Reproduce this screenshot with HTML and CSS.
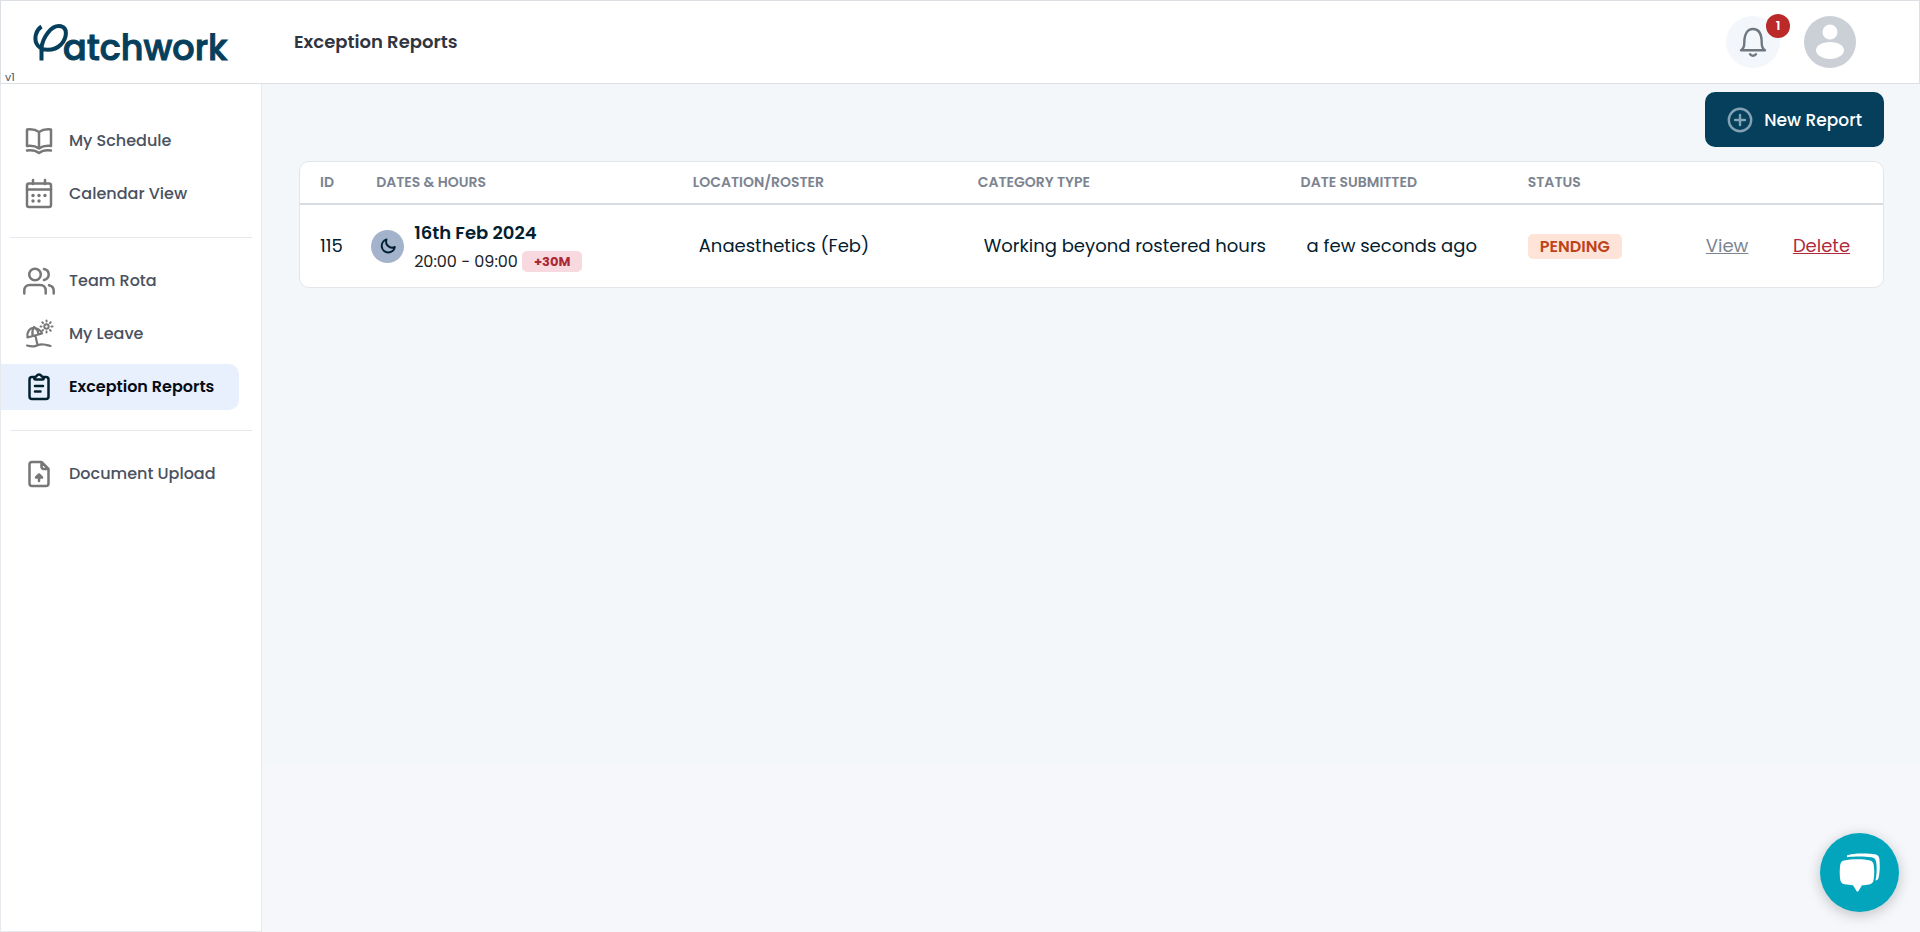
FILE: index.html
```html
<!DOCTYPE html>
<html lang="en">
<head>
<meta charset="utf-8">
<title>Exception Reports - Patchwork</title>
<meta name="viewport" content="width=device-width, initial-scale=1">
<link rel="stylesheet" href="styles.css">
</head>
<body>
<div class="app">
  <header class="topbar">
    <div class="brand">
      <a class="logo" href="#" aria-label="Patchwork">
        <svg class="logo-mark" viewBox="0 0 36 38" aria-hidden="true"><path d="M8.500 2.500C3 6 1 14 3.500 19.500c4 8.500 17.500 8 24.500 1C34 14 35 4 28 2.300 18 .3 9.500 14 8.500 24V36.500"/></svg>
        <span class="logo-text">atchwork</span>
      </a>
      <span class="version">v1</span>
    </div>
    <h1 class="page-title">Exception Reports</h1>
    <div class="account">
      <button class="bell" type="button" aria-label="Notifications">
        <svg class="bell-icon" viewBox="0 0 28 30" aria-hidden="true"><path d="M2 23.200h24c-2.200-1.200-3.300-3.500-3.300-7.500C22.700 7 19.500 2 14 2S5.300 7 5.300 15.700c0 4-1.100 6.300-3.300 7.500z"/><path d="M11 27.200c1.200 2 4.800 2 6 0"/></svg>
        <span class="count">1</span>
      </button>
      <button class="avatar" type="button" aria-label="Profile">
        <svg viewBox="0 0 52 52" aria-hidden="true"><circle cx="26" cy="26" r="26" fill="#cbd0d6"/><circle cx="26" cy="16" r="7.500" fill="#fff"/><path d="M12 34.500c0-5 6-8.500 14-8.500s14 3.500 14 8.500c0 4-6 8.500-14 8.500s-14-4.500-14-8.500z" fill="#fff"/></svg>
      </button>
    </div>
  </header>
  <div class="body">
    <nav class="sidebar" aria-label="Main">
      <ul class="nav-group">
        <li><a class="nav-item" href="#">
          <svg class="icon" viewBox="0 0 32 32" aria-hidden="true"><path d="M16 7c-3.500-2.500-8-3-12-2.500V21c4-.5 8.500 0 12 2.500C19.500 21 24 20.500 28 21V4.500C24 4 19.500 4.500 16 7zM16 7v16.500M4 25.500c4-.6 8.500-.2 12 2.500 3.500-2.700 8-3.100 12-2.500"/></svg>
          My Schedule</a></li>
        <li><a class="nav-item" href="#">
          <svg class="icon" viewBox="0 0 32 32" aria-hidden="true"><rect x="4" y="5.500" width="24" height="23.500" rx="2"/><path d="M4 11.500h24M10 2v4M22 2v4"/><g fill="currentColor" stroke="none"><circle cx="10" cy="17.500" r="1.700"/><circle cx="16" cy="17.500" r="1.700"/><circle cx="22" cy="17.500" r="1.700"/><circle cx="10" cy="23" r="1.700"/><circle cx="16" cy="23" r="1.700"/></g></svg>
          Calendar View</a></li>
      </ul>
      <hr class="divider">
      <ul class="nav-group">
        <li><a class="nav-item" href="#">
          <svg class="icon" viewBox="0 0 32 32" aria-hidden="true"><circle cx="12" cy="9.500" r="5.800"/><path d="M1.300 28.500v-3c0-3.300 2.400-5.500 5.500-5.500h10.400c3.100 0 5.500 2.200 5.500 5.500v3M21 4c2.900.7 4.700 2.900 4.700 5.500s-1.800 4.800-4.700 5.500M26 20.200c3 .7 4.700 2.600 4.700 5.300v3"/></svg>
          Team Rota</a></li>
        <li><a class="nav-item" href="#">
          <svg class="icon" viewBox="0 0 32 32" aria-hidden="true"><path d="M4.500 19.500c-.7-6.500 2.500-10 7-9.500 3.500.2 6 2.500 7.500 5.500zM9.500 18C9 14.500 9.500 11.500 11 9c2.500 1.500 4 4 4.500 7M12.500 18l2 9M4 27.500c3 .8 5 1.200 8 .6 4-.8 4-2.300 8.500-1.600 3 .4 4.500 1 7 1.500" stroke-width="2.200"/><circle cx="23.500" cy="8.500" r="2.200" stroke-width="2"/><path d="M23.500 2.500v1M23.500 13.500v1M17.500 8.500h1M28.500 8.500h1M19.300 4.300l.7.700M27 12l.7.700M27.700 4.300l-.7.700M20 12l-.7.700" stroke-width="2"/></svg>
          My Leave</a></li>
        <li><a class="nav-item active" href="#" aria-current="page">
          <svg class="icon" viewBox="0 0 32 32" aria-hidden="true"><path d="M12 6H9a2.500 2.500 0 0 0-2.500 2.500v17A2.500 2.500 0 0 0 9 28h14a2.500 2.500 0 0 0 2.500-2.500v-17A2.500 2.500 0 0 0 23 6h-3M12 15h8M12 20.500h5.500"/><path d="M12.500 8.500c-1 0-1.300-.4-1.200-1.200.3-1.600 1.200-1.300 2-2C13.800 4.800 14 3.500 16 3.500s2.200 1.300 2.700 1.800c.8.700 1.700.4 2 2 .1.800-.2 1.200-1.200 1.200z"/></svg>
          Exception Reports</a></li>
      </ul>
      <hr class="divider">
      <ul class="nav-group">
        <li><a class="nav-item" href="#">
          <svg class="icon" viewBox="0 0 32 32" aria-hidden="true"><path d="M18.500 4H9a2.500 2.500 0 0 0-2.500 2.500v19A2.500 2.500 0 0 0 9 28h14a2.500 2.500 0 0 0 2.500-2.500V11zM18.500 4v4.500A2.500 2.500 0 0 0 21 11h4.500M16 23v-5.500M13 19.500l3-3 3 3z"/></svg>
          Document Upload</a></li>
      </ul>
    </nav>
    <main class="content">
      <div class="actions">
        <button class="new-report" type="button">
          <svg class="plus" viewBox="0 0 26 26" aria-hidden="true"><circle cx="13" cy="13" r="11.200"/><path d="M13 8v10M8 13h10"/></svg>
          New Report
        </button>
      </div>
      <div class="card">
        <table class="reports">
          <colgroup><col class="c-id"><col class="c-dates"><col class="c-location"><col class="c-category"><col class="c-submitted"><col class="c-status"><col class="c-view"><col class="c-delete"></colgroup>
          <thead>
            <tr><th scope="col">ID</th><th scope="col">DATES &amp; HOURS</th><th scope="col">LOCATION/ROSTER</th><th scope="col">CATEGORY TYPE</th><th scope="col">DATE SUBMITTED</th><th scope="col">STATUS</th><td></td><td></td></tr>
          </thead>
          <tbody>
            <tr>
              <td>115</td>
              <td class="cell-dates">
                <div class="shift">
                  <span class="moon"><svg viewBox="0 0 16 16" aria-hidden="true"><path d="M6.500 1.500A6.600 6.600 0 1 0 14.800 9 6 6 0 0 1 6.500 1.500z"/></svg></span>
                  <div class="when">
                    <strong class="date">16th Feb 2024</strong>
                    <div class="hours">20:00 − 09:00 <span class="extra">+30M</span></div>
                  </div>
                </div>
              </td>
              <td class="inset">Anaesthetics (Feb)</td>
              <td class="inset">Working beyond rostered hours</td>
              <td class="inset">a few seconds ago</td>
              <td><span class="status">PENDING</span></td>
              <td><a class="view" href="#">View</a></td>
              <td><a class="delete" href="#">Delete</a></td>
            </tr>
          </tbody>
        </table>
      </div>
    </main>
  </div>
</div>
<button class="chat" type="button" aria-label="Open chat">
  <svg viewBox="0 0 42 40" aria-hidden="true"><path d="M8 2.500C12-.2 32 0 37 1.500c2 .7 3 2 3.300 4C41 12 41 19 39.500 25c-.4 1.500-1.500 2.200-3 2.500C38 20 38 13 37 8.500c-.5-2.500-2-3.800-4.500-4.200C25 3.300 15 3.500 8 4.200z"/><path d="M5 7.500c7-1.700 20-1.700 26 0 2 .6 3.200 1.800 3.600 4 .9 5.500.9 10 0 15.500-.4 2.500-2 4-4.600 4.500-2 .4-5 .6-7 .8L19.500 38c-.7 1-1.300 1-2 0L14 32.300c-3-.2-6-.5-8.500-1-2.500-.5-3.800-2-4.200-4.300-.8-5.500-.8-10 0-15.500.4-2.200 1.700-3.500 3.700-4z"/></svg>
</button>
</body>
</html>
```

FILE: styles.css
```css
* { box-sizing: border-box; }

body {
  margin: 0;
  background: #f5f7fb;
  color: #03202f;
  font-family: Poppins, Inter, "Open Sans", sans-serif;
  font-size: 18px;
  line-height: 24px;
}

button { padding: 0; border: 0; font: inherit; cursor: pointer; }
svg { display: block; fill: none; stroke-linecap: round; stroke-linejoin: round; }

.app { display: flex; flex-direction: column; min-height: 100vh; }

.topbar {
  display: flex;
  align-items: center;
  height: 84px;
  padding-right: 63px;
  background: #fff;
  border: 1px solid #dcdfe3;
}
.brand {
  display: flex;
  flex: none;
  flex-direction: column;
  justify-content: flex-end;
  width: 261px;
  height: 100%;
}
.logo {
  display: flex;
  align-items: flex-start;
  padding-left: 32px;
  color: #063f5c;
  text-decoration: none;
}
.logo-mark { width: 36px; height: 38px; margin-right: -6px; stroke: currentColor; stroke-width: 4; stroke-linecap: butt; }
.logo-text { font-size: 35px; font-weight: 500; line-height: 48px; -webkit-text-stroke: 1px currentColor; }
.version { padding-left: 4px; color: #4b5563; font-size: 11px; line-height: 11px; }
.page-title { margin: 0 auto 0 32px; color: #30353f; font-size: 18px; font-weight: 600; }

.account { display: flex; align-items: center; gap: 24px; }
.bell {
  position: relative;
  display: flex;
  align-items: center;
  justify-content: center;
  width: 54px;
  height: 52px;
  border-radius: 50%;
  background: #f3f6fa;
}
.bell-icon { width: 28px; height: 30px; stroke: #6f7781; stroke-width: 2.4; }
.count {
  position: absolute;
  top: -2px;
  right: -10px;
  width: 24px;
  height: 24px;
  border-radius: 50%;
  background: #bb2929;
  color: #fff;
  font-size: 13px;
  font-weight: 600;
  line-height: 24px;
}
.avatar { width: 52px; height: 52px; border-radius: 50%; background: none; }

.body { display: flex; flex: 1; }

.sidebar {
  flex: none;
  width: 262px;
  padding: 34px 9px 0 0;
  background: #fff;
  border: solid #e6e9ed;
  border-width: 0 1px 1px;
}
.nav-group { display: grid; gap: 7px; margin: 0; padding: 0; list-style: none; }
.nav-item {
  display: flex;
  align-items: center;
  gap: 14px;
  height: 46px;
  margin-right: 13px;
  padding-left: 22px;
  border-radius: 0 10px 10px 0;
  color: #4a5160;
  font-size: 16px;
  font-weight: 500;
  text-decoration: none;
}
.icon { flex: none; width: 32px; height: 32px; color: #777; stroke: currentColor; stroke-width: 2.5; }
.active { background: #e8f0fd; color: #060b14; font-weight: 600; }
.active .icon { color: #03202f; }
.divider { height: 1px; margin: 20px 0 20px 9px; border: 0; background: #e6e8eb; }

.content { flex: 1; min-width: 0; padding: 8px 36px 0 37px; background: linear-gradient(#f3f7fa 680px, #f5f7fb 680px); }
.actions { display: flex; justify-content: flex-end; margin-bottom: 14px; }
.new-report {
  display: flex;
  align-items: center;
  gap: 11px;
  height: 55px;
  padding: 1px 22px 0;
  border-radius: 10px;
  background: #053f5c;
  color: #fff;
  font-size: 17px;
  font-weight: 500;
}
.plus { width: 26px; height: 26px; stroke: #83a2b3; stroke-width: 2.4; }

.card { overflow: hidden; border: 1px solid #e2e6ea; border-radius: 10px; background: #fff; }
.reports { width: 100%; border-collapse: collapse; table-layout: fixed; }
.c-id { width: 3.8%; }
.c-dates { width: 20%; }
.c-location { width: 18%; }
.c-category { width: 20.4%; }
.c-submitted { width: 14.35%; }
.c-status { width: 11.25%; }
.c-view { width: 5.5%; }
.c-delete { width: 6.7%; }

.reports th, .reports td { padding: 0 0 0 16px; text-align: left; white-space: nowrap; }
.reports tr > :first-child { padding-left: 20px; }
.reports thead tr { height: 42px; border-bottom: 2px solid #dadde0; }
.reports thead th { padding-bottom: 2px; color: #7b8490; font-size: 14px; font-weight: 600; line-height: 20px; }
.reports tbody tr { height: 83px; }
.reports .inset { padding-left: 22px; }
.reports .cell-dates { padding-left: 11px; }

.shift { display: flex; align-items: center; gap: 10px; }
.moon {
  display: flex;
  align-items: center;
  justify-content: center;
  width: 33px;
  height: 33px;
  border-radius: 50%;
  background: #a3b3cc;
}
.moon svg { width: 16px; height: 16px; stroke: #03202f; stroke-width: 2; }
.when { padding-top: 3px; }
.date { display: block; font-weight: 600; line-height: 28px; }
.hours { display: flex; align-items: center; gap: 4px; color: #20242b; font-size: 16px; line-height: 30px; }
.extra {
  padding: 0 12px;
  border-radius: 5px;
  background: #f8d9df;
  color: #ab2a39;
  font-size: 13px;
  font-weight: 700;
  line-height: 21px;
}
.status {
  display: inline-block;
  padding: 0 12px;
  border-radius: 5px;
  background: #fde3d8;
  color: #bd4318;
  font-size: 16px;
  font-weight: 600;
  line-height: 25px;
}
.view { color: #7b8490; }
.delete { color: #b02a3c; }

.chat {
  position: fixed;
  right: 21px;
  bottom: 20px;
  display: flex;
  align-items: center;
  justify-content: center;
  width: 79px;
  height: 79px;
  border-radius: 50%;
  background: #03a5bd;
  box-shadow: 0 3px 14px rgba(0, 0, 0, .22);
}
.chat svg { width: 42px; height: 40px; fill: #fff; }
```
